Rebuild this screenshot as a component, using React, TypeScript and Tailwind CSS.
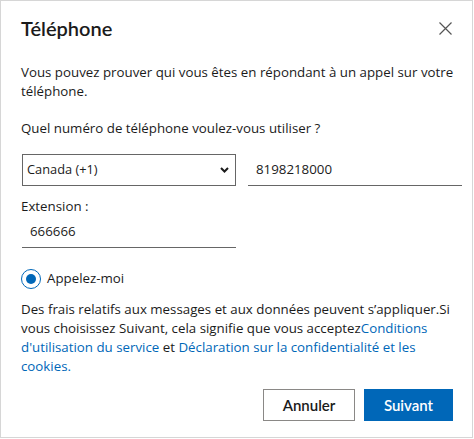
import React from 'react';

const body = { fontFamily: '"Open Sans", "Noto Sans", sans-serif' };
const heading = { fontFamily: 'Lato, "Open Sans", sans-serif' };

export default function App() {
  return (
    <div className="bg-white w-[474px] h-[439px]" style={body}>
      <div className="w-[473px] h-[438px] border border-[#d6d6d6] bg-white pl-[20px] pr-[10px] pt-[13px] text-[#1b1b1b]">
        {/* Header */}
        <div className="flex items-center justify-between h-[28px]">
          <h1 className="text-[20px] leading-[28px] font-semibold" style={heading}>
            Téléphone
          </h1>
          <button className="w-[24px] h-[24px] flex items-center justify-center mr-[5px]" aria-label="Fermer">
            <svg width="13" height="13" viewBox="0 0 13 13" fill="none" stroke="#555" strokeWidth="1.2">
              <path d="M0.5 0.5 L12.5 12.5 M12.5 0.5 L0.5 12.5" />
            </svg>
          </button>
        </div>

        {/* Description */}
        <p className="mt-[21px] text-[13.3px] leading-[19px] pr-[2px]">
          Vous pouvez prouver qui vous êtes en répondant à un appel sur votre téléphone.
        </p>
        <p className="mt-[18px] text-[13.3px] leading-[19px]">Quel numéro de téléphone voulez-vous utiliser ?</p>

        {/* Numéro */}
        <div className="mt-[16px] flex gap-[12px] pl-[1px]">
          <div className="relative w-[214px] h-[32px] border border-[#666] flex items-center pl-[4px] text-[12.8px]">
            <span>Canada (+1)</span>
            <svg className="absolute right-[6px] top-[12px]" width="9" height="6" viewBox="0 0 9 6" fill="none" stroke="#1b1b1b" strokeWidth="2">
              <path d="M1 1 L4.5 4.5 L8 1" />
            </svg>
          </div>
          <div className="w-[214px] h-[32px] border-b border-[#666] flex items-center pl-[8px] text-[13.3px]">
            8198218000
          </div>
        </div>

        {/* Extension */}
        <p className="mt-[11px] text-[13.3px] leading-[19px]">Extension :</p>
        <div className="ml-[1px] w-[214px] h-[32px] border-b border-[#666] flex items-center pl-[8px] text-[13.3px]">
          666666
        </div>

        {/* Radio */}
        <div className="mt-[21px] flex items-center gap-[6px] h-[20px]">
          <span className="w-[20px] h-[20px] rounded-full border border-[#0067b8] flex items-center justify-center">
            <span className="w-[10px] h-[10px] rounded-full bg-[#0067b8]" />
          </span>
          <span className="text-[13.3px]">Appelez-moi</span>
        </div>

        {/* Disclaimer */}
        <p className="mt-[11px] text-[13.3px] leading-[19px]">
          Des frais relatifs aux messages et aux données peuvent s’appliquer.Si vous choisissez Suivant, cela signifie que
          vous acceptez<a className="text-[#0067b8]">Conditions d'utilisation du service</a> et{' '}
          <a className="text-[#0067b8]">Déclaration sur la confidentialité et les cookies.</a>
        </p>

        {/* Buttons */}
        <div className="mt-[13px] flex justify-end gap-[9px] pr-[9px]" style={heading}>
          <button className="w-[92px] h-[32px] border border-[#8a8886] bg-white text-[15px] font-semibold text-[#1b1b1b]">
            Annuler
          </button>
          <button className="w-[89px] h-[32px] bg-[#0067b8] text-[15px] font-semibold text-white">Suivant</button>
        </div>
      </div>
    </div>
  );
}
